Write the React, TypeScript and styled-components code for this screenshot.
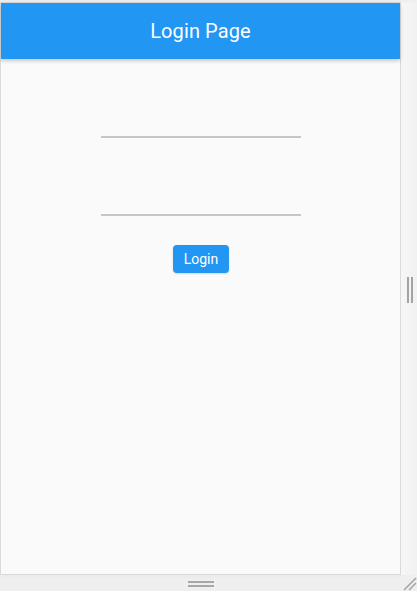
import React from "react";
import styled, { createGlobalStyle } from "styled-components";

const Global = createGlobalStyle`
  html, body { margin: 0; padding: 0; }
  body {
    width: 417px;
    height: 591px;
    overflow: hidden;
    background: #efefef;
    font-family: Roboto, "Noto Sans", Arial, sans-serif;
  }
`;

const Page = styled.div`
  width: 417px;
  height: 591px;
  display: flex;
  flex-direction: column;
  background: #efefef;
`;

const TopRow = styled.div`
  display: flex;
  padding-top: 2px;
  height: 573px;
`;

const Frame = styled.div`
  width: 399px;
  height: 571px;
  border: 1px solid #dadada;
  background: #fafafa;
  display: flex;
  flex-direction: column;
  box-shadow: 2px 0 6px rgba(0, 0, 0, 0.05);
`;

const AppBar = styled.header`
  height: 56px;
  background: #2196f3;
  color: #ffffff;
  display: flex;
  align-items: center;
  justify-content: center;
  font-size: 20px;
  font-weight: 400;
  letter-spacing: 0.1px;
  box-shadow: 0 2px 4px rgba(0, 0, 0, 0.2);
  position: relative;
  z-index: 1;
`;

const Form = styled.div`
  display: flex;
  flex-direction: column;
  align-items: center;
  padding-top: 29px;
  padding-left: 1px;
  gap: 28px;
`;

const Field = styled.input`
  width: 200px;
  height: 48px;
  box-sizing: content-box;
  padding: 0;
  border: none;
  border-bottom: 2px solid #c6c6c6;
  background: transparent;
  outline: none;
  font-family: inherit;
  font-size: 16px;
`;

const Button = styled.button`
  margin-top: 1px;
  width: 56px;
  height: 28px;
  border: none;
  border-radius: 4px;
  background: #2196f3;
  color: #ffffff;
  font-family: inherit;
  font-size: 14px;
  font-weight: 400;
  padding: 0;
  box-shadow: 0 1px 2px rgba(0, 0, 0, 0.15);
  cursor: pointer;
`;

const SideGutter = styled.div`
  flex: 1;
  display: flex;
  align-items: center;
  justify-content: center;
  padding-left: 1px;
  padding-bottom: 2px;
  background: linear-gradient(90deg, #f6f6f6, #f1f1f1);
`;

const VHandle = styled.div`
  display: flex;
  gap: 2px;
  margin-top: 4px;
`;

const VBar = styled.span`
  display: block;
  width: 2px;
  height: 26px;
  background: #a3a3a3;
`;

const BottomBar = styled.div`
  flex: 1;
  display: flex;
  align-items: center;
  position: relative;
`;

const HHandleWrap = styled.div`
  width: 401px;
  display: flex;
  justify-content: center;
  padding-left: 0px;
`;

const HHandle = styled.div`
  display: flex;
  flex-direction: column;
  gap: 2px;
  margin-top: 2px;
`;

const HBar = styled.span`
  display: block;
  width: 26px;
  height: 2px;
  background: #a8a8a8;
`;

const Corner = styled.svg`
  position: absolute;
  right: 0;
  bottom: 0;
`;

export default function App() {
  return (
    <>
      <Global />
      <Page>
        <TopRow>
          <Frame>
            <AppBar>Login Page</AppBar>
            <Form>
              <Field type="text" aria-label="username" />
              <Field type="password" aria-label="password" />
              <Button>Login</Button>
            </Form>
          </Frame>
          <SideGutter>
            <VHandle>
              <VBar />
              <VBar />
            </VHandle>
          </SideGutter>
        </TopRow>
        <BottomBar>
          <HHandleWrap>
            <HHandle>
              <HBar />
              <HBar />
            </HHandle>
          </HHandleWrap>
          <Corner width="14" height="14" viewBox="0 0 14 14">
            <line x1="1" y1="13" x2="13" y2="1" stroke="#a0a0a0" strokeWidth="1.4" />
            <line x1="6" y1="13" x2="13" y2="6" stroke="#a0a0a0" strokeWidth="1.4" />
          </Corner>
        </BottomBar>
      </Page>
    </>
  );
}
